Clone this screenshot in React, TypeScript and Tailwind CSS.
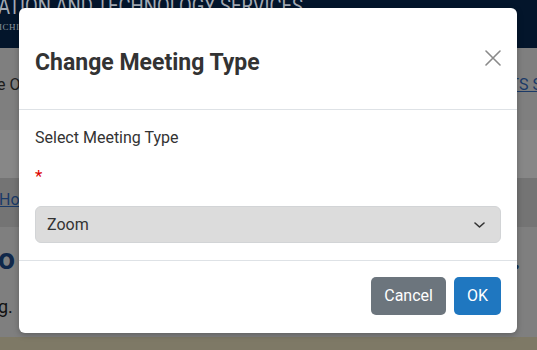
import React from "react";

export default function App() {
  return (
    <div className="relative w-[537px] h-[350px] overflow-hidden font-['Roboto',sans-serif]">
      {/* dimmed page behind */}
      <div className="flex flex-col">
        <div className="h-[48px] bg-[#03152b] relative overflow-hidden">
          <div className="absolute left-[-2px] top-[-6px] origin-left scale-x-[0.77] whitespace-nowrap text-[24px] leading-[24px] text-[#a3aab4]">
            ATION AND TECHNOLOGY SERVICES
          </div>
          <div className="absolute left-[-1px] top-[21px] whitespace-nowrap font-['Liberation_Serif',serif] text-[9px] tracking-[0.5px] text-[#8e959e]">
            ICHIGAN
          </div>
        </div>
        <div className="h-[82px] bg-[#7f7f7f] flex items-start justify-between pt-[28px] text-[16px] leading-[18px]">
          <span className="text-[#1c1c1c] -ml-[3px]">e O</span>
          <span className="text-[#1b3a68] underline whitespace-nowrap mr-[-5px]">TS S</span>
        </div>
        <div className="h-[48px] bg-[#878787]" />
        <div className="h-[49px] bg-[#747474] pt-[13px] text-[16px] leading-[18px]">
          <span className="text-[#1b3a68] underline -ml-[1px]">Ho</span>
        </div>
        <div className="h-[110px] bg-[#7f7f7f] relative">
          <div className="absolute left-[-2px] top-[17px] text-[30px] font-bold leading-[30px] text-[#10284a]">o t</div>
          <div className="absolute left-[512px] top-[17px] text-[30px] font-bold leading-[30px] text-[#10284a]">.</div>
          <div className="absolute left-[-2px] top-[70px] text-[18px] leading-[20px] text-[#111]">g.</div>
        </div>
        <div className="h-[13px] bg-[#7e7966]" />
      </div>

      {/* modal */}
      <div className="absolute left-[19px] top-[8px] w-[498px] rounded-[6px] bg-white shadow-[0_2px_6px_rgba(0,0,0,0.25)]">
        <div className="h-[102px] border-b border-[#dee2e6] px-4 pt-[41px] flex items-start justify-between">
          <h2 className="text-[23px] leading-[28px] font-bold text-[#333333]">Change Meeting Type</h2>
          <svg width="16" height="16" viewBox="0 0 16 16" className="mt-[1px]" fill="none" stroke="#8a8a8a" strokeWidth="1.6" strokeLinecap="round">
            <path d="M1 1 L15 15 M15 1 L1 15" />
          </svg>
        </div>
        <div className="px-4 pt-[17px] pb-[17px]">
          <div className="text-[16px] leading-[22px] text-[#333333]">Select Meeting Type</div>
          <div className="mt-[16px] text-[17px] leading-[22px] text-[#dd0000]">*</div>
          <div className="mt-[19px] h-[37px] rounded-[6px] bg-[#dcdcdc] border border-[#d2d4d6] flex items-center justify-between pl-[11px] pr-[15px]">
            <span className="text-[16px] text-[#333333]">Zoom</span>
            <svg width="11" height="6" viewBox="0 0 11 6" fill="none" stroke="#333" strokeWidth="1.6" strokeLinecap="round" strokeLinejoin="round">
              <path d="M1 1 L5.5 5 L10 1" />
            </svg>
          </div>
        </div>
        <div className="border-t border-[#dee2e6] px-4 pt-4 pb-[18px] flex justify-end gap-2">
          <button className="h-[38px] rounded-[5px] bg-[#6c757d] px-[13px] text-[16px] text-white">Cancel</button>
          <button className="h-[38px] rounded-[5px] bg-[#1f77c0] px-[13px] text-[16px] text-white">OK</button>
        </div>
      </div>
    </div>
  );
}
